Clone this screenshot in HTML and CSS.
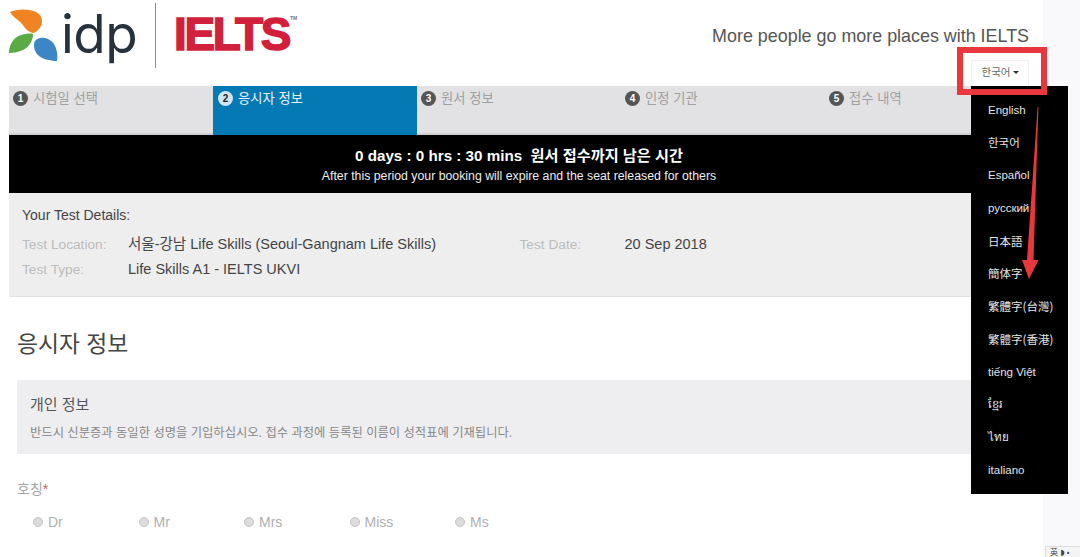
FILE: index.html
```html
<!DOCTYPE html>
<html lang="ko">
<head>
<meta charset="utf-8">
<title>IELTS 응시자 정보</title>
<link rel="stylesheet" href="styles.css">
</head>
<body>
<div class="page">
  <header class="header">
    <div class="brand">
      <svg class="petals" width="50" height="56" viewBox="9 8 50 56" aria-hidden="true">
        <path fill="#f08422" d="M10 12C17 9 31 8 39 14C43 18 43 25 39 29C37 31 35 33 33 33C26 32 24 25 19 21C16 18 12 16 10 12Z"/>
        <path fill="#5aab46" d="M9 53C9 44 14 37 21 35C25 34 30 33 33 34C33 41 29 47 23 50C19 52 14 53 9 53Z"/>
        <path fill="#3d86c6" d="M35 41C40 35 50 38 54 44C57 49 58 55 57 61C50 61 41 59 37 54C34 50 33 45 35 41Z"/>
      </svg>
      <span class="idp">idp</span>
      <span class="divider"></span>
      <span class="ielts">IELTS</span><span class="tm">TM</span>
    </div>
    <div class="header-right">
      <p class="tagline">More people go more places with IELTS</p>
      <button class="lang-btn" type="button">한국어 <span class="caret"></span></button>
    </div>
  </header>

  <div class="steps">
    <div class="step"><span class="num">1</span>시험일 선택</div>
    <div class="step active"><span class="num">2</span>응시자 정보</div>
    <div class="step"><span class="num">3</span>원서 정보</div>
    <div class="step"><span class="num">4</span>인정 기관</div>
    <div class="step"><span class="num">5</span>접수 내역</div>
  </div>

  <div class="timer">
    <p class="timer-main">0 days : 0 hrs : 30 mins&nbsp; 원서 접수까지 남은 시간</p>
    <p class="timer-sub">After this period your booking will expire and the seat released for others</p>
  </div>

  <section class="details">
    <p class="details-title">Your Test Details:</p>
    <div class="details-grid">
      <span class="key">Test Location:</span><span class="val">서울-강남 Life Skills (Seoul-Gangnam Life Skills)</span>
      <span class="key">Test Date:</span><span class="val">20 Sep 2018</span>
      <span class="key">Test Type:</span><span class="val">Life Skills A1 - IELTS UKVI</span>
    </div>
  </section>

  <main class="form">
    <h1 class="form-title">응시자 정보</h1>
    <div class="notice">
      <h2 class="notice-title">개인 정보</h2>
      <p class="notice-text">반드시 신분증과 동일한 성명을 기입하십시오. 접수 과정에 등록된 이름이 성적표에 기재됩니다.</p>
    </div>
    <p class="field-label">호칭<span class="req">*</span></p>
    <div class="radios">
      <label class="radio"><span class="dot"></span>Dr</label>
      <label class="radio"><span class="dot"></span>Mr</label>
      <label class="radio"><span class="dot"></span>Mrs</label>
      <label class="radio"><span class="dot"></span>Miss</label>
      <label class="radio"><span class="dot"></span>Ms</label>
    </div>
  </main>
</div>

<ul class="lang-menu">
  <li>English</li>
  <li>한국어</li>
  <li>Español</li>
  <li>русский</li>
  <li lang="ja">日本語</li>
  <li lang="zh-TW">簡体字</li>
  <li lang="zh-TW">繁體字(台灣)</li>
  <li lang="zh-HK">繁體字(香港)</li>
  <li>tiếng Việt</li>
  <li lang="km">ខ្មែរ</li>
  <li lang="th">ไทย</li>
  <li>italiano</li>
</ul>

<div class="callout"></div>
<svg class="arrow" width="20" height="176" viewBox="0 0 20 176" aria-hidden="true">
  <path fill="#e8383d" d="M17.600 2L18.400 2L13.500 155L18.500 155L9 174L2 155L7 155Z"/>
</svg>

<div class="ime">英 <span class="moon">◗</span> ·</div>
</body>
</html>
```
FILE: styles.css
```css
* { box-sizing: border-box; }
html, body { margin: 0; height: 557px; overflow: hidden; }
body {
  background: #f9f9fb;
  font-family: "Liberation Sans", "Noto Sans CJK KR", sans-serif;
  color: #444;
  position: relative;
}
p, h1, h2, ul { margin: 0; padding: 0; }

.page {
  width: 1043px;
  height: 557px;
  background: #fff;
  padding: 0 14px 0 9px;
}

.header { height: 86px; display: flex; justify-content: space-between; }
.brand { display: flex; align-items: flex-start; width: 320px; }
.petals { margin-top: 8px; flex: none; }
.idp {
  font-family: Inter, sans-serif;
  font-size: 53px;
  line-height: 60px;
  color: #27323c;
  margin: 4px 0 0 2px;
  letter-spacing: -.5px;
  width: 94px;
  flex: none;
}
.divider { width: 1px; height: 65px; background: #8c8c8c; margin-top: 3px; flex: none; }
.ielts {
  font-size: 46px;
  line-height: 50px;
  font-weight: 700;
  color: #d21f3c;
  letter-spacing: -2.4px;
  -webkit-text-stroke: 1.5px #d21f3c;
  margin: 9px 0 0 18px;
}
.tm { font-size: 5px; line-height: 6px; font-weight: 700; color: #777; margin: 15px 0 0 1px; }

.header-right { display: flex; flex-direction: column; align-items: flex-end; }
.tagline { font-size: 17.900px; line-height: 22px; margin-top: 25px; color: #555; }
.lang-btn {
  margin: 13px 0 0 0;
  width: 58px;
  height: 26px;
  padding: 0 0 5px 1px;
  border: 1px solid #f6eef0;
  border-bottom: 0;
  background: #fff;
  font: 10.500px "Noto Sans CJK KR", sans-serif;
  color: #666;
}
.caret {
  display: inline-block;
  border: 3px solid transparent;
  border-top-color: #333;
  border-bottom: 0;
  vertical-align: middle;
}

.steps {
  display: grid;
  grid-template-columns: repeat(5, 204px);
  height: 49px;
  background: #e2e2e5;
  border-bottom: 2px solid #cfcfd1;
}
.step {
  display: flex;
  align-items: flex-start;
  gap: 5px;
  padding: 5px 0 0 4px;
  font-size: 13.300px;
  line-height: 15px;
  color: #a0a0a0;
}
.step.active { background: #0579b3; color: #e6f2f8; padding-left: 5px; height: 49px; }
.num {
  width: 15px;
  height: 15px;
  border-radius: 50%;
  background: #555;
  color: #fff;
  font-size: 10px;
  font-weight: 700;
  text-align: center;
  line-height: 15px;
  flex: none;
}
.active .num { background: #cfe6f4; color: #222; }

.timer {
  height: 58px;
  background: #000;
  color: #fff;
  text-align: center;
  padding-top: 12px;
}
.timer-main { font-size: 15.200px; font-weight: 700; line-height: 18px; }
.timer-sub { font-size: 12.300px; line-height: 14px; margin-top: 4px; color: #eee; }

.details {
  height: 104px;
  background: #eeeeef;
  border-bottom: 1px solid #e2e2e2;
  border-radius: 0 0 2px 2px;
  padding: 14px 13px 0;
}
.details-title { font-size: 14px; line-height: 17px; color: #444; }
.details-grid {
  display: grid;
  grid-template-columns: 106px 391.500px 105px 1fr;
  grid-auto-rows: 25px;
  margin-top: 8px;
  line-height: 25px;
}
.key { color: #bcbcbc; font-size: 13.700px; }
.val { color: #444; font-size: 14.500px; }

.form { padding: 0 0 0 8px; }
.form-title { font-size: 22.800px; font-weight: 400; line-height: 30px; margin-top: 32px; color: #444; }
.notice {
  height: 74px;
  margin-top: 21px;
  background: #eeeef0;
  padding: 14px 13px 0;
}
.notice-title { font-size: 15px; font-weight: 400; line-height: 21px; color: #555; }
.notice-text { font-size: 12.300px; line-height: 16px; margin-top: 10px; color: #888; }

.field-label { font-size: 14px; line-height: 18px; margin-top: 26px; color: #a5a5a5; }
.req { color: #c9636b; }
.radios {
  display: grid;
  grid-template-columns: repeat(5, 105.500px);
  margin-top: 14px;
  padding-left: 16px;
}
.radio { display: flex; align-items: center; gap: 5px; font-size: 14px; line-height: 20px; color: #b0b0b0; }
.dot {
  width: 10px;
  height: 10px;
  border-radius: 50%;
  background: #dcdcdc;
  border: 1px solid #c4c4c4;
  flex: none;
}

.lang-menu {
  position: absolute;
  left: 971px;
  top: 86px;
  width: 97px;
  height: 408px;
  background: #000;
  list-style: none;
  padding: 8px 0 0 17px;
  color: #e4e4e4;
  font-size: 11.500px;
  line-height: 32.700px;
}
.lang-menu li { height: 32.700px; white-space: nowrap; overflow: visible; }
.lang-menu li[lang="ja"] { font-family: "Noto Sans CJK JP", sans-serif; }
.lang-menu li[lang="zh-TW"], .lang-menu li[lang="zh-HK"] { font-family: "Noto Sans CJK TC", sans-serif; }

.callout {
  position: absolute;
  left: 957px;
  top: 47px;
  width: 90px;
  height: 48px;
  border: 6px solid #e8383d;
}
.arrow { position: absolute; left: 1020px; top: 105px; }

.ime {
  position: absolute;
  left: 1045px;
  top: 546px;
  width: 35px;
  height: 11px;
  background: #f4f4f4;
  border: 1px solid #ddd;
  border-width: 1px 0 0 1px;
  font: 8px/10px "Noto Sans CJK SC", sans-serif;
  color: #444;
  padding-left: 4px;
}
.moon { font-family: "DejaVu Sans", sans-serif; }
```
